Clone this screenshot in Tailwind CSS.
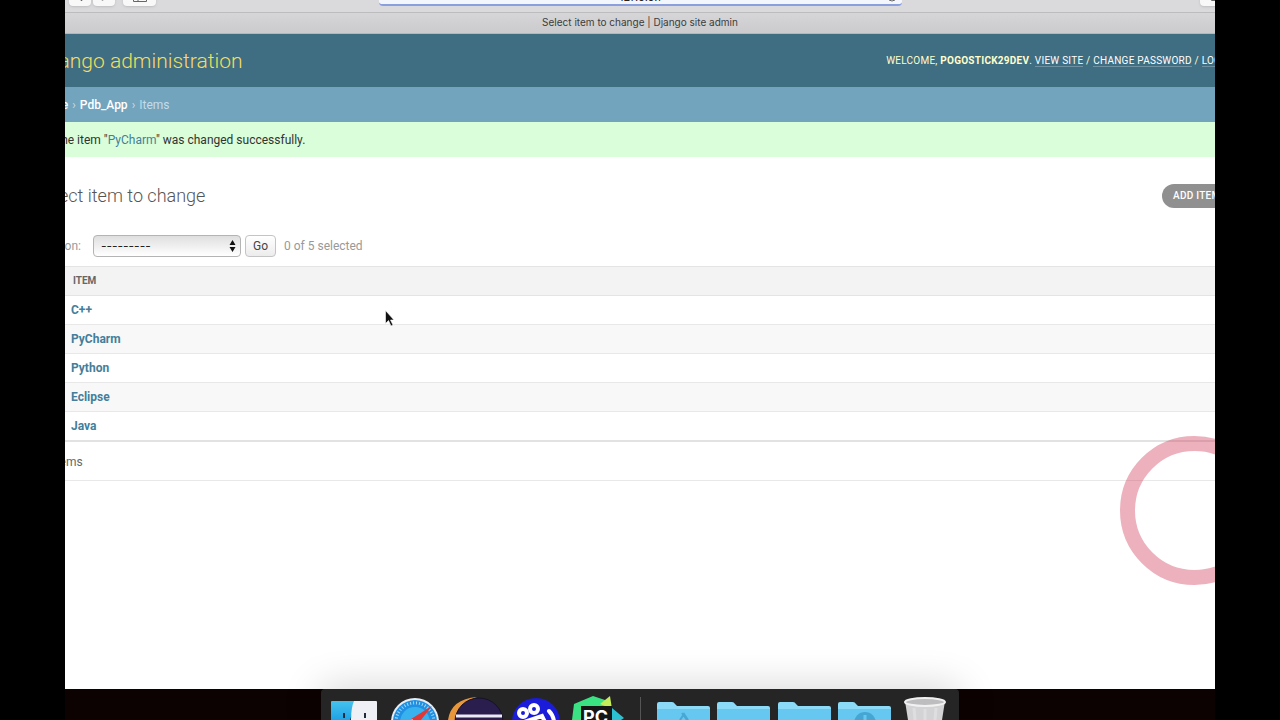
<!doctype html>
<html lang="en">

<head>
  <meta charset="UTF-8">
  <meta name="viewport" content="width=device-width, initial-scale=1.0">
  <title>Select item to change | Django site admin</title>
  <script src="https://cdn.jsdelivr.net/npm/@tailwindcss/browser@4"></script>
</head>

<body class="h-screen overflow-hidden bg-black px-[65px] font-['Roboto',sans-serif] text-xs text-[#333]">
  <div class="relative flex h-full flex-col overflow-hidden bg-[#0c0202]">

    <!-- Browser toolbar, its upper part above the visible area -->
    <div class="-mt-7 grid h-[41px] shrink-0 grid-cols-[1fr_523px_1fr] items-end border-b border-[#bcbcbe] bg-[#dadadc] pb-[6px]">
      <div class="flex gap-[2px] pl-1">
        <button aria-label="Back" class="flex h-[22px] w-[22px] items-center justify-center rounded bg-[#f8f8f8] shadow-sm">
          <svg class="h-3 w-3" viewBox="0 0 12 12" fill="none" stroke="#666" stroke-width="1.3"><path d="M8 0 3 6l5 6" /></svg>
        </button>
        <button aria-label="Forward" class="flex h-[22px] w-[22px] items-center justify-center rounded bg-[#f8f8f8] shadow-sm">
          <svg class="h-3 w-3" viewBox="0 0 12 12" fill="none" stroke="#aaa" stroke-width="1.3"><path d="m4 0 5 6-5 6" /></svg>
        </button>
        <button aria-label="Sidebar" class="ml-[6px] flex h-[22px] w-[33px] items-center justify-center rounded bg-[#f8f8f8] pt-[2px] shadow-sm">
          <svg class="h-3 w-[14px]" viewBox="0 0 14 12" fill="none" stroke="#666"><path d="M.5.5h13v11H.5zM5 .5v11" /></svg>
        </button>
      </div>
      <div class="relative">
        <input aria-label="Address" value="127.0.0.1" class="block h-[22px] w-full rounded border-b-2 border-[#8a9fdc] bg-[#f3f6fc] pt-[6px] text-center font-['Inter',sans-serif] text-[11px] text-[#222]">
        <svg class="absolute right-[5px] bottom-1 h-[10px] w-[10px]" viewBox="0 0 10 10" fill="none" stroke="#666"><circle cx="5" cy="5" r="4" /></svg>
      </div>
      <div class="flex justify-end">
        <button aria-label="Share" class="-mr-4 flex h-[22px] w-[31px] items-center justify-center rounded bg-[#f8f8f8] shadow-sm">
          <svg class="h-3 w-[10px]" viewBox="0 0 10 12" fill="none" stroke="#666"><path d="M3 4H.5v7.500h9V4H7M5 0v7" /></svg>
        </button>
      </div>
    </div>
    <div class="flex h-[21px] shrink-0 items-center justify-center border-b border-[#b4b6b8] bg-linear-to-b from-[#d6d6d8] to-[#cbcbcd] font-['Inter',sans-serif] text-[10px] text-[#3c3c3c]">
      Select item to change | Django site admin
    </div>

    <!-- Page, wider than the visible area -->
    <div class="-mx-[65px] flex min-h-0 flex-1 flex-col bg-white whitespace-nowrap">
      <header class="flex h-[53px] shrink-0 items-center justify-between bg-[#3f6d82] pr-9 pl-10 text-[#ffc]">
        <h1 class="text-[21px] font-light text-[#f5dd5d]">Django administration</h1>
        <div class="text-[10px] tracking-wide uppercase">
          Welcome, <strong>pogostick29dev</strong>.
          <a href="#" class="border-b border-white/25 text-white">View site</a> /
          <a href="#" class="border-b border-white/25 text-white">Change password</a> /
          <a href="#" class="border-b border-white/25 text-white">Log out</a>
        </div>
      </header>

      <nav class="flex h-[35px] shrink-0 items-center gap-1 bg-[#73a4be] px-9 text-[#c4dce8]">
        <a href="#" class="font-medium text-white">Home</a>
        <span>›</span>
        <a href="#" class="font-medium text-white">Pdb_App</a>
        <span>›</span>
        <span>Items</span>
      </nav>

      <p class="flex h-[35px] shrink-0 items-center bg-[#d9fed9] pl-[54px]">
        <span>The item "<a href="#" class="text-[#447e9b]">PyCharm</a>" was changed successfully.</span>
      </p>

      <main class="px-[35px] pt-[27px]">
        <div class="flex h-6 items-center justify-between">
          <h2 class="text-lg font-light text-[#555]">Select item to change</h2>
          <a href="#" class="mr-[5px] flex h-6 items-center rounded-full bg-[#909090] px-[11px] text-[10px] font-medium tracking-wide text-white">ADD ITEM +</a>
        </div>

        <form class="mt-[27px] flex h-[22px] items-center text-[#999]">
          <label for="action" class="w-[58px] pr-3 text-right">Action:</label>
          <div class="relative">
            <select id="action" class="h-[22px] w-[148px] appearance-none rounded border border-[#b4b4b4] bg-linear-to-b from-[#dfdfdf] to-white pl-[7px] font-['Inter',sans-serif] text-[#222]">
              <option>---------</option>
            </select>
            <svg class="pointer-events-none absolute top-[5px] right-[5px] h-3 w-[7px]" viewBox="0 0 7 12" fill="#111"><path d="M3.500 0 6.500 5h-6zM3.500 12l3-5h-6z" /></svg>
          </div>
          <button type="button" class="ml-1 h-[22px] w-[31px] rounded border border-[#c4c4c4] bg-linear-to-b from-white to-[#ececec] text-[#444]">Go</button>
          <span class="ml-2">0 of 5 selected</span>
        </form>

        <table class="mt-[9px] -mx-[35px] w-[calc(100%+70px)] border-collapse border-b-2 border-[#e2e2e2] text-left">
          <thead>
            <tr class="h-[29px] border-y border-[#e4e4e4] bg-[#f3f3f3]">
              <th class="py-0 pl-[73px] text-[10px] font-bold text-[#666]">ITEM</th>
            </tr>
          </thead>
          <tbody class="font-bold text-[#447e9b]">
            <tr class="h-[29px] border-b border-[#e8e8e8]">
              <td class="py-0 pl-[71px]"><a href="#">C++</a></td>
            </tr>
            <tr class="h-[29px] border-b border-[#e8e8e8] bg-[#f8f8f8]">
              <td class="py-0 pl-[71px]"><a href="#">PyCharm</a></td>
            </tr>
            <tr class="h-[29px] border-b border-[#e8e8e8]">
              <td class="py-0 pl-[71px]"><a href="#">Python</a></td>
            </tr>
            <tr class="h-[29px] border-b border-[#e8e8e8] bg-[#f8f8f8]">
              <td class="py-0 pl-[71px]"><a href="#">Eclipse</a></td>
            </tr>
            <tr class="h-[29px]">
              <td class="py-0 pl-[71px]"><a href="#">Java</a></td>
            </tr>
          </tbody>
        </table>
        <p class="-mx-[35px] flex h-[39px] items-center border-b border-[#e8e8e8] pt-[2px] pl-[43px] text-[#666]">5 items</p>
      </main>
    </div>

    <!-- Dock -->
    <div class="flex h-[31px] shrink-0 justify-center">
      <div class="flex rounded-t-sm bg-[#252525] px-[5px] shadow-[0_0_40px_rgba(0,0,0,0.2)]">
        <svg class="h-[31px] w-[60px]" viewBox="0 0 60 31">
          <defs>
            <linearGradient id="finder" x2="0" y2="1"><stop stop-color="#46c2ee" /><stop offset="1" stop-color="#1ea3e6" /></linearGradient>
          </defs>
          <path fill="url(#finder)" d="M6 12h24l-6 19H5V13q0-1 1-1z" />
          <path fill="#eef0f5" d="M28 12h22q1 0 1 1v18H25q0-12 3-19z" />
          <path stroke="#1d2b3c" stroke-width="2" d="M18 24v5M39 24v5" />
        </svg>
        <svg class="h-[31px] w-[60px]" viewBox="0 0 60 31">
          <circle cx="29" cy="33" r="24" fill="#e6edf3" />
          <circle cx="29" cy="33" r="22" fill="#2090e3" />
          <circle cx="29" cy="33" r="15" fill="#38b2ef" />
          <circle cx="29" cy="33" r="19" fill="none" stroke="#a8d9f7" stroke-width="3" stroke-dasharray="1 2" />
          <path fill="#e03737" d="M46 17 25 30l6 6z" />
          <path fill="#f3f3f3" d="m26 30 6 6-16 10z" />
        </svg>
        <svg class="h-[31px] w-[60px]" viewBox="0 0 60 31">
          <path fill="#e8963a" d="M2 31Q5 10 31 8q-18 6-22 23z" />
          <circle cx="33" cy="33" r="24" fill="#2a1e4e" stroke="#171126" />
          <path stroke="#eceaf4" stroke-width="3" d="M10 27h46" />
        </svg>
        <svg class="h-[31px] w-[60px]" viewBox="0 0 60 31">
          <circle cx="30" cy="33" r="24" fill="#1b1cd9" />
          <g fill="none" stroke="#fff" stroke-width="4">
            <circle cx="17" cy="24" r="4" />
            <circle cx="28" cy="20" r="4" />
            <path stroke-linecap="round" d="m18 33 18-6 3 6M43 22q4 4 5 10" />
          </g>
        </svg>
        <svg class="h-[31px] w-[60px]" viewBox="0 0 60 31">
          <path fill="#3be283" d="M8 15 27 7l12 4 4 20H6z" />
          <path fill="#c5ec59" d="m34 15 10-8 2 13z" />
          <path fill="#2bc3d3" d="m46 19 12 10-3 2h-9z" />
          <path fill="#161616" d="M15 17h31v14H15z" />
          <text x="17" y="34" fill="#fff" font-family="Inter, sans-serif" font-size="18" font-weight="700">PC</text>
        </svg>
        <div class="flex w-7 justify-center pt-2">
          <div class="w-px bg-[#555]"></div>
        </div>
        <svg class="h-[31px] w-[60px]" viewBox="0 0 60 31">
          <path fill="#8bdaf8" d="M3 31V15q0-2 2-2h13q2 0 3 2l2 2h31q2 0 2 2v12z" />
          <path fill="#66c8f1" d="M3 20h53v11H3z" />
          <path fill="none" stroke="#48a7d4" stroke-width="2" d="m26 31 4-6 4 6M28 24l5 7" />
        </svg>
        <svg class="h-[31px] w-[60px]" viewBox="0 0 60 31">
          <path fill="#8bdaf8" d="M3 31V15q0-2 2-2h13q2 0 3 2l2 2h31q2 0 2 2v12z" />
          <path fill="#66c8f1" d="M3 20h53v11H3z" />
        </svg>
        <svg class="h-[31px] w-[60px]" viewBox="0 0 60 31">
          <path fill="#8bdaf8" d="M4 31V15q0-2 2-2h13q2 0 3 2l2 2h31q2 0 2 2v12z" />
          <path fill="#66c8f1" d="M4 20h53v11H4z" />
        </svg>
        <svg class="h-[31px] w-[60px]" viewBox="0 0 60 31">
          <path fill="#8bdaf8" d="M4 31V15q0-2 2-2h13q2 0 3 2l2 2h31q2 0 2 2v12z" />
          <path fill="#66c8f1" d="M4 20h53v11H4z" />
          <circle cx="31" cy="34" r="11" fill="#46a6d3" />
          <path stroke="#66c8f1" stroke-width="3" d="M31 26v5" />
        </svg>
        <svg class="h-[31px] w-[60px]" viewBox="0 0 60 31">
          <path fill="#d3d3d5" d="M11 12h40l-3 19H14z" />
          <ellipse cx="31" cy="13" rx="20" ry="4" fill="#bdbdc0" stroke="#f1f1f1" stroke-width="2" />
          <path stroke="#dedee0" stroke-width="3" d="m20 19 1 12M31 20v11M42 19l-1 12" />
        </svg>
      </div>
    </div>

    <!-- Loading ring and pointer float over the page -->
    <div class="absolute top-[436px] left-[1055px] h-[149px] w-[149px] rounded-full border-[15px] border-[#cc3350]/38"></div>
    <svg class="absolute top-[310px] left-[320px] h-[17px] w-[11px]" viewBox="0 0 11 17">
      <path fill="#111" stroke="#fff" stroke-width=".6" d="M.500.500v13l3-3 2.500 5.500 2-1-2.500-5h3.500z" />
    </svg>
  </div>
</body>

</html>
